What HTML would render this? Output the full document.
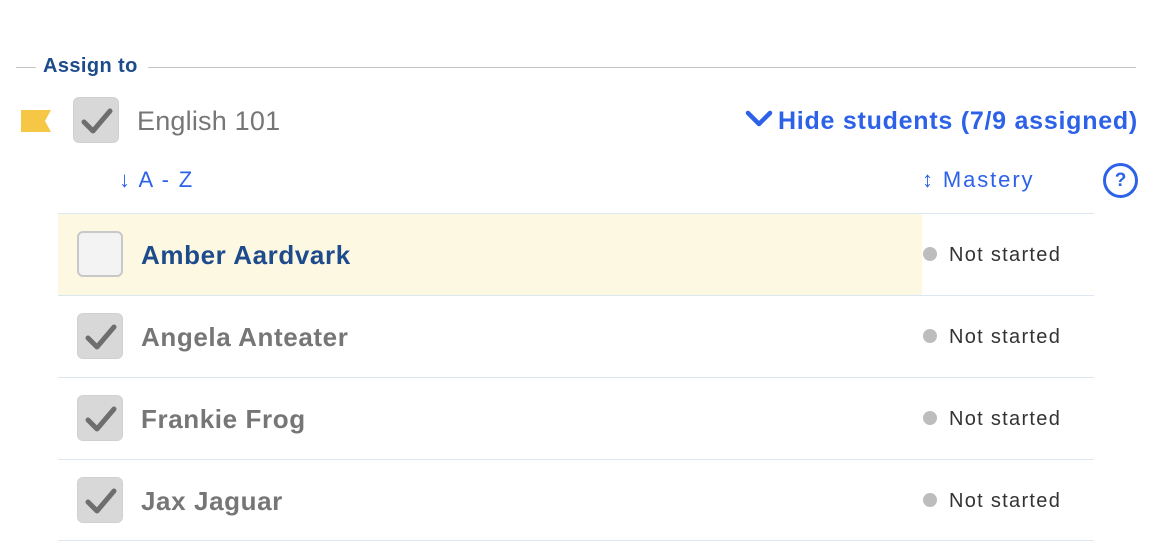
<!DOCTYPE html>
<html><head><style>
*{margin:0;padding:0;box-sizing:border-box}
body{width:1172px;height:542px;background:#fff;font-family:"Liberation Sans",sans-serif;position:relative;overflow:hidden}
.a{position:absolute}
.line{position:absolute;height:1px;background:#c4c4c4}
.cb{position:absolute;width:46px;height:46px;border-radius:6px;background:#d8d8d8;border:1px solid #d0d0d0}
.cb svg{position:absolute;left:7px;top:8px}
.sep{position:absolute;left:58px;width:1036px;height:1px;background:#dbe8f3}
.name{position:absolute;left:141px;font-size:26px;font-weight:bold;letter-spacing:0.6px;color:#767676;white-space:nowrap}
.st{position:absolute;left:949px;font-size:20px;letter-spacing:1.3px;color:#333;white-space:nowrap}
.dot{position:absolute;left:923px;width:14px;height:14px;border-radius:50%;background:#bdbdbd}
</style></head><body>
<div class="line" style="left:16px;top:67px;width:20px"></div>
<div class="line" style="left:148px;top:67px;width:988px"></div>
<div class="a" style="left:43px;top:55px;font-size:20px;font-weight:bold;letter-spacing:0.4px;color:#1d4b8c">Assign to</div>

<svg class="a" style="left:21px;top:110px" width="30" height="22"><polygon points="0,0 30,0 24,11 30,22 0,22" fill="#f6c744"/></svg>
<div class="cb" style="left:73px;top:97px"><svg width="32" height="30" viewBox="0 0 32 30"><path d="M3 16 L12 25 L29 5" fill="none" stroke="#6e6e6e" stroke-width="5" stroke-linecap="round" stroke-linejoin="round"/></svg></div>
<div class="a" style="left:137px;top:106px;font-size:27px;letter-spacing:0.2px;color:#767676">English 101</div>

<svg class="a" style="left:745px;top:110px" width="28" height="18"><path d="M3 3 L14 14 L25 3" fill="none" stroke="#2d62e8" stroke-width="4.5" stroke-linecap="round" stroke-linejoin="round"/></svg>
<div class="a" style="left:778px;top:107px;font-size:25px;font-weight:bold;letter-spacing:0.75px;color:#2d62e8;white-space:nowrap">Hide students (7/9 assigned)</div>

<div class="a" style="left:119px;top:167px;font-size:22px;letter-spacing:1.8px;color:#2d62e8;white-space:nowrap">↓ A - Z</div>
<div class="a" style="left:922px;top:167px;font-size:22px;letter-spacing:1.9px;color:#2d62e8;white-space:nowrap">↕ Mastery</div>
<div class="a" style="left:1103px;top:163px;width:35px;height:35px;border:3px solid #2d62e8;border-radius:50%;color:#2d62e8;font-size:19px;font-weight:bold;text-align:center;line-height:29px">?</div>

<div class="sep" style="top:213px"></div>
<div class="a" style="left:58px;top:214px;width:864px;height:81px;background:#fdf8e1"></div>
<div class="cb" style="left:77px;top:231px;background:#f3f3f3;border:2px solid #c8c8c8"></div>
<div class="name" style="top:240px;color:#1d4b8c">Amber Aardvark</div>
<div class="dot" style="top:247px"></div><div class="st" style="top:244px">Not started</div>

<div class="sep" style="top:295px"></div>
<div class="cb" style="left:77px;top:313px"><svg width="32" height="30" viewBox="0 0 32 30"><path d="M3 16 L12 25 L29 5" fill="none" stroke="#6e6e6e" stroke-width="5" stroke-linecap="round" stroke-linejoin="round"/></svg></div>
<div class="name" style="top:322px">Angela Anteater</div>
<div class="dot" style="top:329px"></div><div class="st" style="top:326px">Not started</div>

<div class="sep" style="top:377px"></div>
<div class="cb" style="left:77px;top:395px"><svg width="32" height="30" viewBox="0 0 32 30"><path d="M3 16 L12 25 L29 5" fill="none" stroke="#6e6e6e" stroke-width="5" stroke-linecap="round" stroke-linejoin="round"/></svg></div>
<div class="name" style="top:404px">Frankie Frog</div>
<div class="dot" style="top:411px"></div><div class="st" style="top:408px">Not started</div>

<div class="sep" style="top:459px"></div>
<div class="cb" style="left:77px;top:477px"><svg width="32" height="30" viewBox="0 0 32 30"><path d="M3 16 L12 25 L29 5" fill="none" stroke="#6e6e6e" stroke-width="5" stroke-linecap="round" stroke-linejoin="round"/></svg></div>
<div class="name" style="top:486px">Jax Jaguar</div>
<div class="dot" style="top:493px"></div><div class="st" style="top:490px">Not started</div>
<div class="sep" style="top:540px"></div>
</body></html>
